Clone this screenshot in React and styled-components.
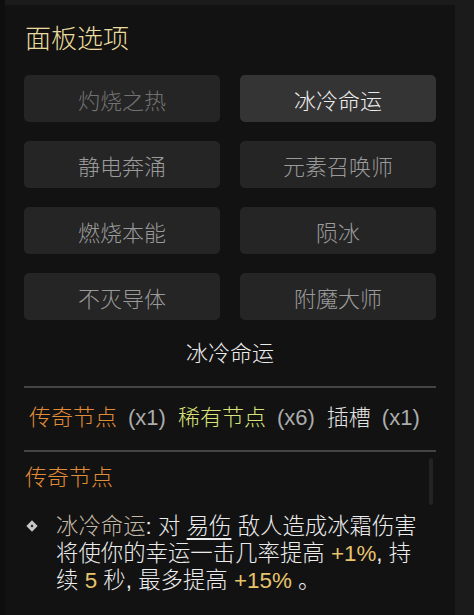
import styled, { createGlobalStyle } from "styled-components";

const GlobalStyle = createGlobalStyle`
  html, body {
    margin: 0;
    padding: 0;
    background: #1b1b1b;
  }
  body {
    font-family: "Liberation Sans", "Noto Sans CJK SC", sans-serif;
    font-weight: 300;
  }
`;

const options = [
  { label: "灼烧之热", dim: true },
  { label: "冰冷命运", active: true },
  { label: "静电奔涌" },
  { label: "元素召唤师" },
  { label: "燃烧本能" },
  { label: "陨冰" },
  { label: "不灭导体" },
  { label: "附魔大师" },
];

const stats = [
  { name: "传奇节点", color: "#e38c38", count: 1 },
  { name: "稀有节点", color: "#d9e27a", count: 6 },
  { name: "插槽", color: "#e2e2e2", count: 1 },
];

export default function App() {
  return (
    <>
      <GlobalStyle />
      <Page>
        <LeftRail />
        <Panel>
          <Title>面板选项</Title>
          <OptionGrid>
            {options.map((o) => (
              <OptionButton key={o.label} $active={o.active} $dim={o.dim}>
                {o.label}
              </OptionButton>
            ))}
          </OptionGrid>
          <Selected>冰冷命运</Selected>
          <Divider />
          <Stats>
            {stats.map((s) => (
              <StatItem key={s.name}>
                <Tag $color={s.color}>{s.name}</Tag>
                <Count>(x{s.count})</Count>
              </StatItem>
            ))}
          </Stats>
          <Divider />
          <Detail>
            <Scrollbar />
            <DetailHeading>传奇节点</DetailHeading>
            <Entry>
              <Bullet>
                <Diamond />
              </Bullet>
              <EntryText>
                <NodeName>冰冷命运</NodeName>: 对 <Keyword>易伤</Keyword> 敌人造成冰霜伤害
                <br />
                将使你的幸运一击几率提高 <Num>+1%</Num>, 持
                <br />
                续 <Num>5</Num> 秒, 最多提高 <Num>+15%</Num> 。
              </EntryText>
            </Entry>
          </Detail>
        </Panel>
      </Page>
    </>
  );
}

const Page = styled.div`
  display: flex;
  min-height: 615px;
  padding: 5px 19px 0 0;
  box-sizing: border-box;
`;

const LeftRail = styled.div`
  width: 5px;
  margin-top: -5px;
  background: #0e0e0e;
`;

const Panel = styled.div`
  flex: 1;
  background: #121212;
  padding: 17px 19px 0 19px;
  border-top-right-radius: 2px;
  display: flex;
  flex-direction: column;
`;

const Title = styled.div`
  font-size: 26px;
  line-height: 34px;
  color: #e9dc9c;
  padding-left: 1px;
`;

const OptionGrid = styled.div`
  margin-top: 19px;
  display: grid;
  grid-template-columns: 1fr 1fr;
  column-gap: 20px;
  row-gap: 19px;
`;

const OptionButton = styled.div`
  height: 47px;
  border-radius: 5px;
  background: ${(p) => (p.$active ? "#343434" : "#252525")};
  color: ${(p) => (p.$active ? "#ececec" : p.$dim ? "#727272" : "#9a9a9a")};
  font-size: 22px;
  display: flex;
  align-items: center;
  justify-content: center;
`;

const Selected = styled.div`
  margin-top: 19px;
  text-align: center;
  font-size: 22px;
  line-height: 30px;
  color: #ececec;
`;

const Divider = styled.div`
  height: 2px;
  background: #444;
  margin-top: 17px;
`;

const Stats = styled.div`
  margin-top: 15px;
  padding-left: 5px;
  display: flex;
  gap: 12px;
  font-size: 22px;
  line-height: 30px;
  white-space: nowrap;
`;

const StatItem = styled.span`
  display: flex;
  gap: 11px;
`;

const Tag = styled.span`
  color: ${(p) => p.$color};
`;

const Count = styled.span`
  color: #acacac;
`;

const Detail = styled.div`
  position: relative;
  padding-top: 11px;
`;

const Scrollbar = styled.div`
  position: absolute;
  right: 3px;
  top: 6px;
  width: 4px;
  height: 47px;
  border-radius: 2px;
  background: #232323;
`;

const DetailHeading = styled.div`
  font-size: 22px;
  line-height: 30px;
  color: #e38c38;
  padding-left: 1px;
`;

const Entry = styled.div`
  margin-top: 20px;
  display: flex;
`;

const Bullet = styled.div`
  width: 32px;
  flex: none;
  padding-top: 9px;
  padding-left: 4px;
  box-sizing: border-box;
`;

const Diamond = styled.div`
  width: 2px;
  height: 2px;
  border: 3.5px solid #c6c6c6;
  background: #121212;
  transform: rotate(45deg);
`;

const EntryText = styled.div`
  font-size: 22.4px;
  line-height: 27px;
  color: #ececec;
  white-space: nowrap;
`;

const NodeName = styled.span`
  color: #c4b9a6;
`;

const Keyword = styled.span`
  text-decoration: underline;
  text-underline-offset: 4px;
`;

const Num = styled.span`
  color: #e6c46c;
`;
